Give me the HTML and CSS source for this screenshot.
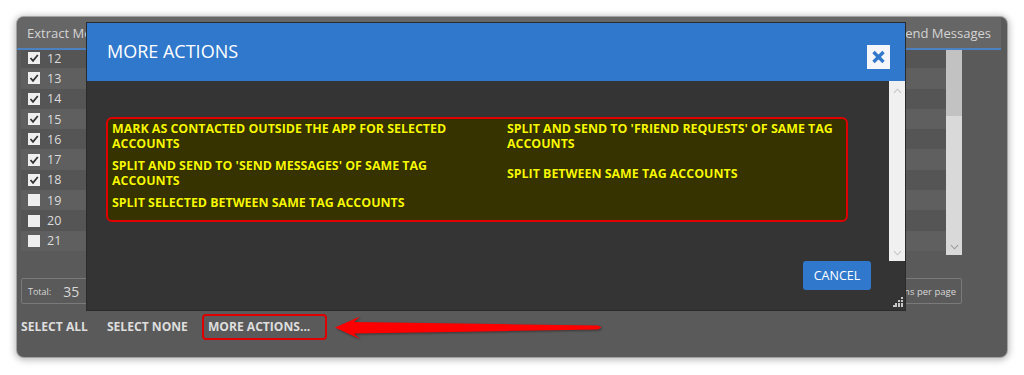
FILE: index.html
```html
<!DOCTYPE html>
<html>
<head>
<meta charset="utf-8">
<link rel="stylesheet" href="styles.css">
</head>
<body>
<div class="window">
  <div class="tabs">
    <div class="tab">Extract Messages</div>
    <div class="tab">Send Messages</div>
  </div>
  <div class="content">
    <div class="listwrap">
      <div class="list">
        <div class="row"><span class="cb on"><svg viewBox="0 0 12 12"><polyline points="2.5,6 5,8.8 9.8,3"/></svg></span><span class="num">12</span></div>
        <div class="row"><span class="cb on"><svg viewBox="0 0 12 12"><polyline points="2.5,6 5,8.8 9.8,3"/></svg></span><span class="num">13</span></div>
        <div class="row"><span class="cb on"><svg viewBox="0 0 12 12"><polyline points="2.5,6 5,8.8 9.8,3"/></svg></span><span class="num">14</span></div>
        <div class="row"><span class="cb on"><svg viewBox="0 0 12 12"><polyline points="2.5,6 5,8.8 9.8,3"/></svg></span><span class="num">15</span></div>
        <div class="row"><span class="cb on"><svg viewBox="0 0 12 12"><polyline points="2.5,6 5,8.8 9.8,3"/></svg></span><span class="num">16</span></div>
        <div class="row"><span class="cb on"><svg viewBox="0 0 12 12"><polyline points="2.5,6 5,8.8 9.8,3"/></svg></span><span class="num">17</span></div>
        <div class="row"><span class="cb on"><svg viewBox="0 0 12 12"><polyline points="2.5,6 5,8.8 9.8,3"/></svg></span><span class="num">18</span></div>
        <div class="row"><span class="cb"></span><span class="num">19</span></div>
        <div class="row"><span class="cb"></span><span class="num">20</span></div>
        <div class="row"><span class="cb"></span><span class="num">21</span></div>
      </div>
      <div class="vscroll">
        <div class="thumb"></div>
        <svg class="chev" viewBox="0 0 10 6"><polyline points="1,1 5,5 9,1"/></svg>
      </div>
    </div>
    <div class="footer">
      <div class="total"><span class="total-label">Total:</span><span class="total-num">35</span></div>
      <div class="perpage">Items per page</div>
    </div>
    <div class="actions">
      <span class="act">SELECT ALL</span>
      <span class="act act-none">SELECT NONE</span>
      <span class="act act-more">MORE ACTIONS...</span>
    </div>
  </div>

  <div class="modal">
    <div class="mhead">
      <div class="mtitle">MORE ACTIONS</div>
      <div class="mclose"><svg viewBox="0 0 23 24"><line x1="6.5" y1="7" x2="16.5" y2="17"/><line x1="16.5" y1="7" x2="6.5" y2="17"/></svg></div>
    </div>
    <div class="mbody">
      <div class="mscrollarea">
        <div class="mcontent">
          <div class="opts">
            <div class="opt">MARK AS CONTACTED OUTSIDE THE APP FOR SELECTED<br>ACCOUNTS</div>
            <div class="opt">SPLIT AND SEND TO 'FRIEND REQUESTS' OF SAME TAG<br>ACCOUNTS</div>
            <div class="opt">SPLIT AND SEND TO 'SEND MESSAGES' OF SAME TAG<br>ACCOUNTS</div>
            <div class="opt">SPLIT BETWEEN SAME TAG ACCOUNTS</div>
            <div class="opt">SPLIT SELECTED BETWEEN SAME TAG ACCOUNTS</div>
          </div>
        </div>
        <div class="mscroll">
          <svg class="mchev" viewBox="0 0 10 6"><polyline points="1,5 5,1 9,5"/></svg>
          <svg class="mchev" viewBox="0 0 10 6"><polyline points="1,1 5,5 9,1"/></svg>
        </div>
      </div>
      <div class="mfooter">
        <div class="cancel">CANCEL</div>
      </div>
    </div>
    <svg class="grip" viewBox="0 0 10 10">
      <rect x="8" y="0" width="2" height="2"/>
      <rect x="5" y="3" width="2" height="2"/><rect x="8" y="3" width="2" height="2"/>
      <rect x="2" y="6" width="2" height="2"/><rect x="5" y="6" width="2" height="2"/><rect x="8" y="6" width="2" height="2"/>
      <rect x="0" y="8" width="2" height="2"/><rect x="2" y="8" width="2" height="2"/><rect x="5" y="8" width="2" height="2"/><rect x="8" y="8" width="2" height="2"/>
    </svg>
  </div>

  <svg class="arrow" viewBox="0 0 280 36">
    <polygon points="5,17.5 30,6.5 24,12 268,15.5 271.5,17.5 268,19.5 24,23.5 30,29"/>
  </svg>
</div>
</body>
</html>
```

FILE: styles.css
```css
html, body {
  margin: 0;
  padding: 0;
}
body {
  background: #ffffff;
  width: 1024px;
  height: 375px;
  overflow: hidden;
  font-family: "Open Sans", "Noto Sans", sans-serif;
}
.window {
  position: relative;
  margin: 17px 0 0 17px;
  width: 990px;
  height: 340px;
  background: #5a5a5a;
  border-radius: 7px;
  box-shadow: 0 0 0 1px #a2a2a2, 0 1px 7px 2px rgba(0, 0, 0, 0.28);
}
.tabs {
  display: flex;
  justify-content: space-between;
  height: 31px;
  margin-right: 6px;
  background: #666666;
  border-bottom: 2px solid #4d82c2;
  border-top-left-radius: 7px;
}
.tab {
  color: #d4d4d4;
  font-size: 13px;
  line-height: 31px;
  padding: 1px 10px 0 10px;
}
.content {
  padding: 0 45px 0 4px;
}
.listwrap {
  display: flex;
  height: 205px;
  overflow: hidden;
}
.list {
  flex: 1;
  margin-top: -2px;
}
.row {
  display: flex;
  align-items: center;
  height: 20.3px;
  padding-left: 7px;
  background: #555555;
}
.row:nth-child(even) {
  background: #5f5f5f;
}
.cb {
  width: 12px;
  height: 12px;
  background: #efefef;
  display: flex;
}
.cb svg {
  width: 12px;
  height: 12px;
}
.cb polyline {
  fill: none;
  stroke: #333333;
  stroke-width: 1.8;
}
.num {
  color: #dcdcdc;
  font-size: 12.5px;
  margin-left: 7px;
}
.vscroll {
  width: 16px;
  background: #d9d9d9;
  display: flex;
  flex-direction: column;
  align-items: center;
}
.thumb {
  width: 16px;
  height: 66px;
  background: #c2c2c2;
}
.chev {
  width: 9px;
  height: 6px;
  margin-top: auto;
  margin-bottom: 5px;
}
.chev polyline, .mchev polyline {
  fill: none;
  stroke: #9a9a9a;
  stroke-width: 1.2;
}
.footer {
  display: flex;
  justify-content: space-between;
  margin-top: 23px;
  height: 26px;
}
.total, .perpage {
  box-sizing: border-box;
  border: 1px solid #7a7a7a;
  border-radius: 2px;
  display: flex;
  align-items: center;
  color: #d8d8d8;
}
.total {
  width: 200px;
  padding-left: 6px;
}
.total-label {
  font-size: 9px;
}
.total-num {
  font-size: 14px;
  margin-left: 12px;
}
.perpage {
  width: 120px;
  justify-content: flex-end;
  padding-right: 5px;
  font-size: 9.5px;
}
.actions {
  display: flex;
  align-items: center;
  margin-top: 10px;
  height: 26px;
}
.act {
  color: #dedede;
  font-size: 12.1px;
  font-weight: 700;
  line-height: 22px;
}
.act-none {
  margin-left: 19px;
}
.act-more {
  margin-left: 14px;
  border: 2px solid #e00000;
  border-radius: 4px;
  padding: 0 15px 0 4px;
}
.modal {
  position: absolute;
  left: 69px;
  top: 5px;
  width: 820px;
  height: 289px;
  box-sizing: border-box;
  border: 1px solid #2a2a2a;
  background: #343434;
  display: flex;
  flex-direction: column;
}
.mhead {
  height: 58px;
  background: #2f78cc;
  display: flex;
  justify-content: space-between;
  align-items: flex-start;
}
.mtitle {
  color: #ffffff;
  font-size: 18px;
  line-height: 24px;
  margin: 16px 0 0 20px;
}
.mclose {
  width: 23px;
  height: 24px;
  margin: 22px 15px 0 0;
  background: #f4f6f9;
}
.mclose svg {
  width: 23px;
  height: 24px;
  display: block;
}
.mclose line {
  stroke: #2f78cc;
  stroke-width: 3.4;
}
.mbody {
  flex: 1;
  display: flex;
  flex-direction: column;
}
.mscrollarea {
  display: flex;
  height: 180px;
}
.mcontent {
  flex: 1;
  padding: 36px 0 0 19px;
}
.mscroll {
  width: 16px;
  background: #f0f0f0;
  display: flex;
  flex-direction: column;
  justify-content: space-between;
  align-items: center;
  padding: 7px 0 5px 0;
  box-sizing: border-box;
}
.mchev {
  width: 9px;
  height: 6px;
}
.mchev polyline {
  stroke: #c4c4c4;
}
.opts {
  box-sizing: border-box;
  width: 742px;
  height: 105px;
  background: #363300;
  border: 2px solid #e00000;
  border-radius: 6px;
  padding: 2px 4px 0 4px;
  display: grid;
  grid-template-columns: 395px auto;
  row-gap: 7px;
  align-items: center;
  align-content: start;
}
.opt {
  color: #f8f800;
  font-size: 12.4px;
  font-weight: 700;
  line-height: 15px;
  text-shadow: 0 0 1px rgba(0, 0, 0, 0.6);
}
.mfooter {
  flex: 1;
  display: flex;
  justify-content: flex-end;
  align-items: flex-start;
  padding-right: 34px;
}
.cancel {
  width: 68px;
  height: 29px;
  background: #2f78cc;
  border-radius: 3px;
  color: #ffffff;
  font-size: 12.5px;
  line-height: 29px;
  text-align: center;
}
.grip {
  position: absolute;
  right: 2px;
  bottom: 3px;
  width: 10px;
  height: 10px;
}
.grip rect {
  fill: #c8c8c8;
}
.arrow {
  position: absolute;
  left: 313px;
  top: 293px;
  width: 280px;
  height: 36px;
  filter: drop-shadow(1px 1px 1px rgba(0, 0, 0, 0.4));
}
.arrow polygon {
  fill: #ff0000;
}
```
